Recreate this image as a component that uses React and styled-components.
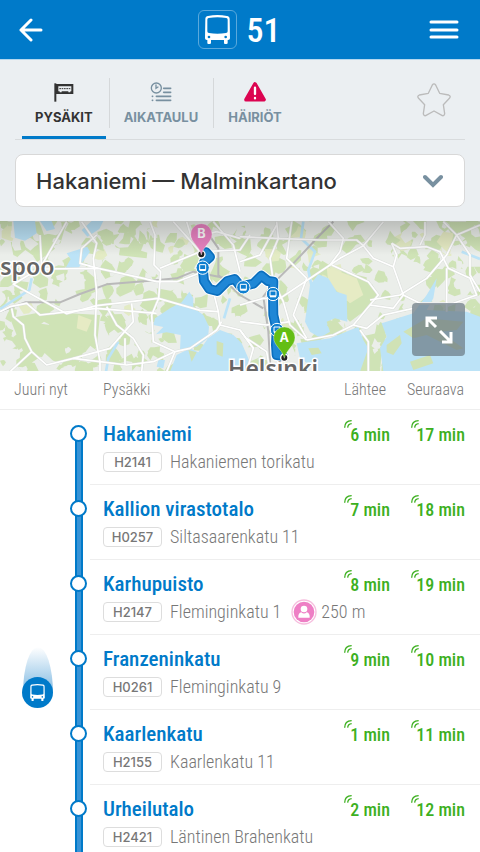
import { useState } from 'react';
import styled, { createGlobalStyle, css } from 'styled-components';

const NARROW = `'Roboto Condensed', 'Liberation Sans Narrow', 'Liberation Sans', sans-serif`;
const WIDE = `Inter, 'Liberation Sans', sans-serif`;

const stops = [
    { name: 'Hakaniemi', code: 'H2141', address: 'Hakaniemen torikatu', next: '6 min', following: '17 min' },
    { name: 'Kallion virastotalo', code: 'H0257', address: 'Siltasaarenkatu 11', next: '7 min', following: '18 min' },
    { name: 'Karhupuisto', code: 'H2147', address: 'Fleminginkatu 1', distance: '250 m', next: '8 min', following: '19 min' },
    { name: 'Franzeninkatu', code: 'H0261', address: 'Fleminginkatu 9', vehicle: true, next: '9 min', following: '10 min' },
    { name: 'Kaarlenkatu', code: 'H2155', address: 'Kaarlenkatu 11', next: '1 min', following: '11 min' },
    { name: 'Urheilutalo', code: 'H2421', address: 'Läntinen Brahenkatu', next: '2 min', following: '12 min' },
];

const tabs = [
    { id: 'stops', label: 'PYSÄKIT' },
    { id: 'timetable', label: 'AIKATAULU' },
    { id: 'alerts', label: 'HÄIRIÖT' },
];

const BusIcon = ({ width, height }) => (
    <svg width={width} height={height} viewBox='0 0 75 87' fill='currentColor' aria-hidden='true'>
        <path
            fillRule='evenodd'
            d='M9 3Q37-3 66 3Q74 4 74 12L75 70Q75 75 69 75H68V84Q68 87 64 87H60Q57 87 57 84V75H18V84Q18 87 14 87H10Q7 87 7 84V75H6Q0 75 0 70L1 12Q1 4 9 3ZM11 9Q7 9 7 14V49Q7 54 12 54Q37 58 63 54Q68 54 68 49V14Q68 9 64 9Q37 5 11 9ZM12 62A4 4 0 1 0 12 70A4 4 0 1 0 12 62ZM62 62A4 4 0 1 0 62 70A4 4 0 1 0 62 62Z'
        />
    </svg>
);

const TabIcon = ({ id }) => {
    if (id === 'stops') {
        return (
            <svg width='20' height='20' viewBox='0 0 60 60' aria-hidden='true'>
                <path d='M4 4V59' stroke='#333' strokeWidth='6' />
                <path fill='#333' d='M3 6H58V36H3Z' />
                <path fill='#ebeff2' d='M13 13H52V28H49V31H43V28H23V31H17V28H13Z' />
                <path stroke='#333' strokeWidth='3' d='M16 20H50' strokeDasharray='5 2' />
            </svg>
        );
    }
    if (id === 'timetable') {
        return (
            <svg width='22' height='20' viewBox='0 0 66 60' fill='none' stroke='#7890a0' strokeWidth='5' strokeLinecap='round' aria-hidden='true'>
                <circle cx='19' cy='18' r='15' strokeWidth='4' />
                <path d='M18 9V19L24 15' strokeWidth='4' />
                <path d='M41 19H62M41 31H62M19 43H62M19 55H62M7 43H8M7 55H8' />
            </svg>
        );
    }
    return (
        <svg width='22' height='20' viewBox='0 0 66 60' aria-hidden='true'>
            <path d='M33 6L60 53H6Z' fill='#dc0451' stroke='#dc0451' strokeWidth='11' strokeLinejoin='round' />
            <path d='M33 17V36M33 48V49' stroke='#fff' strokeWidth='7' strokeLinecap='round' />
        </svg>
    );
};

// Patches of woodland, spread evenly from a fixed seed.
const woodland = (() => {
    let seed = 51;
    const random = () => {
        seed = (seed * 16807) % 2147483647;
        return seed / 2147483647;
    };
    return Array.from({ length: 640 }, () => {
        const x = random() * 1440;
        const y = random() * 460 + 10;
        const size = 10 + random() * 20;
        const points = Array.from({ length: 7 }, (_, i) => {
            const angle = (i / 7) * Math.PI * 2;
            const r = size * (0.4 + random() * 0.9);
            return `${Math.round(x + Math.cos(angle) * r)} ${Math.round(y + Math.sin(angle) * r)}`;
        });
        const tone = random();
        const fill = tone < 0.56 ? '#cfe3b6' : tone < 0.61 ? '#e3ebc4' : '#ebeeea';
        return { d: `M${points.join('L')}Z`, fill };
    });
})();

const roads = [
    'M200 20L120 160L40 208L200 296L290 272L475 250L600 286L655 290',
    'M125 162L295 160L430 190L470 200H530L610 170',
    'M245 20L290 85L280 130L290 230L285 360L300 440V470',
    'M120 60L125 160M295 160L240 145L245 100L290 60',
    'M450 20L465 60L462 150L482 170L476 250L455 300L460 380L525 410L500 470',
    'M480 160L600 110L720 105L750 60',
    'M520 20L600 110L640 230L655 290L660 330L720 345L760 400',
    'M525 410L570 400L650 345L665 320',
    'M0 290L30 275L80 265L120 300L290 280L470 295',
    'M320 275L350 330L400 370L430 420L425 470',
    'M35 280L40 305L70 330L75 370L95 410L30 470M95 410L140 450L220 430L300 440L380 450L460 440L520 412',
    'M395 265L400 320L330 400L220 430M375 370V450',
    'M640 20L700 90L720 170M560 20L575 70L650 50L720 70',
    'M720 65L830 70L960 75L1070 75L1090 92L1150 20',
    'M830 20L835 70L810 130L820 200L850 260L870 330L920 375',
    'M1090 92L1020 130L990 150L900 210L840 250',
    'M1090 92L1120 130L1180 155L1210 240L1260 265',
    'M995 150L1105 200L1135 240L1110 270L1060 330L1000 360L920 375',
    'M1110 255L1200 240L1280 190L1340 120L1370 60L1440 30',
    'M1330 20L1370 60L1410 120V180L1440 230',
    'M1175 85L1200 100L1280 95L1320 110L1345 160L1410 190L1430 240L1360 265L1260 265',
    'M1340 160V290M1080 345L1105 380V470M1275 20V60L1260 90',
    'M720 140L780 120L830 30M720 270L790 250L840 250M875 20L860 130L920 190L880 300L920 370',
    'M720 345L760 400L740 470M740 370L800 410L810 470M720 320L800 330L870 320',
    'M985 20L1030 70L1020 110L990 150M1175 85L1190 120L1180 155M1110 270L1180 280L1210 240',
    'M1060 330L1100 340L1150 300L1240 280',
];

const Pin = ({ x, y, color, letter }) => (
    <g transform={`translate(${x} ${y})`}>
        <circle cy='-6' r='11' fill='#222' stroke='#fff' strokeWidth='4' />
        <path d='M0-4C-5-30-32-42-32-66A32 32 0 0 1 32-66C32-42 5-30 0-4Z' fill={color} stroke='#fff' strokeOpacity='.5' strokeWidth='2' />
        <PinLetter y='-54'>{letter}</PinLetter>
    </g>
);

const MapDrawing = () => (
    <MapSvg viewBox='0 18 1440 450' preserveAspectRatio='xMidYMid slice' role='img' aria-label='Helsinki'>
        <rect y='0' width='1440' height='480' fill='#ebeeea' />
        <path fill='#cfe3b6' d='M20 20H200L180 90L100 150L40 120ZM30 310L130 290L300 300L290 400L170 440L70 410ZM960 150L1110 190L1130 240L1090 290L1050 320L970 240ZM1330 20H1440V110L1370 80ZM470 220L580 240L550 300L480 290ZM1060 370L1150 350L1140 470H1020ZM340 60L450 40L440 130L350 120Z' />
        {woodland.map(({ d, fill }) => (
            <path key={d} d={d} fill={fill} />
        ))}
        <path fill='#cfe3b6' d='M80 320L150 330L210 310L240 360L200 400L120 400L75 360Z' />
        <path fill='#e6ebc4' d='M980 155L1070 190L1090 240L1050 265L985 205ZM1330 50L1360 55L1350 120L1310 80ZM235 300L275 315L260 350L230 340Z' />
        <g fill='#bce3f7'>
            <path d='M40 18H105L110 55L75 77L45 68ZM120 18H155L165 42L140 48ZM245 45L275 18H310L298 42L262 65ZM200 115L262 95L270 110L235 160L195 162L212 132Z' />
            <path d='M465 310L510 280L545 262L568 230L580 250L580 278L610 300L627 335L624 370L590 395L540 405L542 360L500 352L468 358L490 336L460 330Z' />
            <path d='M624 370L660 345L700 360L725 385L745 430L760 470H510L530 420L570 400L595 412ZM475 435H495L490 460L470 455Z' />
            <path d='M930 210L955 178L985 190L1010 230L1040 240L1042 320L1005 310L980 320L990 350L960 368L930 350L915 320Z' />
            <path d='M890 385L990 370L1075 335L1090 375L1105 400L1080 470H960L900 430Z' />
            <path d='M1145 325L1240 295L1280 240L1310 190L1300 250L1280 285L1400 290L1440 305V470H1150L1140 400L1160 365Z' />
        </g>
        <g fill='none' stroke='#bce3f7' strokeWidth='8'>
            <path d='M95 190L88 225L0 282M910 20L903 70L945 110L925 165L935 215M690 250L672 310M355 380L325 430L318 470M1385 110L1440 132' />
        </g>
        <path fill='#d0e2b5' d='M650 378L670 385L668 425L650 418ZM565 405L590 412L575 440ZM1160 390L1200 360L1205 385L1180 420L1160 412ZM925 400L955 398L965 415L935 420ZM980 330L1010 318L1030 340L1000 350ZM1210 350L1280 310L1390 320L1370 345L1320 350L1390 400L1370 405L1280 360L1240 370ZM1230 440L1290 420L1300 445L1240 465Z' />
        <g fill='none' strokeLinejoin='round'>
            <path d='M0 290L75 262L180 262L240 237L320 208L450 197L530 190L580 170L690 192M1000 20L960 60L880 145L820 205L790 245L805 350L812 470M620 50L655 100V180L720 240L790 280' stroke='#b9b9b9' strokeWidth='6' />
            {roads.map((d) => (
                <path key={d} d={d} stroke='#dcdfdc' strokeWidth='8' />
            ))}
            {roads.map((d) => (
                <path key={d} d={d} stroke='#fff' strokeWidth='5' />
            ))}
        </g>
        <PlaceName x='163' y='180' textAnchor='end'>spoo</PlaceName>
        <PlaceName x='819' y='485' textAnchor='middle'>Helsinki</PlaceName>
        <g fill='none' strokeLinejoin='round' strokeLinecap='round'>
            {[['#fff', 36], ['#0b6fbe', 30], ['#1f87d6', 20]].map(([color, width]) => (
                <path
                    key={color}
                    d='M618 112L630 126L612 142L608 158L612 198L628 222L652 228L682 198L704 192L722 215L760 206L784 182L804 198L820 200L819 237L820 300L830 345L828 390L830 420L848 422'
                    stroke={color}
                    strokeWidth={width}
                />
            ))}
        </g>
        {[[608, 158], [730, 217], [819, 237], [831, 345]].map(([x, y]) => (
            <g key={x} transform={`translate(${x} ${y})`}>
                <circle r='20' fill='#0f7fd0' stroke='#fff' strokeWidth='3' />
                <path d='M-9-9H9V7H-9Z' fill='none' stroke='#fff' strokeWidth='3' />
                <path d='M-9 4H9V10H-9Z' fill='#fff' />
            </g>
        ))}
        <Pin x={604} y={124} color='#ea83c2' letter='B' />
        <Pin x={853} y={434} color='#64be14' letter='A' />
    </MapSvg>
);

const Departure = ({ children }) => (
    <Time>
        <Signal viewBox='0 0 24 24' aria-hidden='true'>
            <path d='M2 23Q2 3 23 2M11 23Q12 12 23 11' />
        </Signal>
        {children}
    </Time>
);

const App = () => {
    const [activeTab, setActiveTab] = useState('stops');

    return (
        <>
            <GlobalStyle />
            <TopBar>
                <IconButton type='button' aria-label='Takaisin'>
                    <svg width='24' height='24' viewBox='0 0 24 24' fill='none' stroke='#fff' strokeWidth='3' strokeLinecap='round' strokeLinejoin='round'>
                        <path d='M12 2L2 12L12 22M2 12H22' />
                    </svg>
                </IconButton>
                <RouteTitle>
                    <ModeBadge>
                        <BusIcon width={25} height={29} />
                    </ModeBadge>
                    51
                </RouteTitle>
                <IconButton type='button' aria-label='Valikko'>
                    <svg width='30' height='20' viewBox='0 0 30 20' stroke='#fff' strokeWidth='3' strokeLinecap='round'>
                        <path d='M2 2H28M2 10H28M2 17H28' />
                    </svg>
                </IconButton>
            </TopBar>

            <Controls>
                <TabRow>
                    <TabList>
                        {tabs.map(({ id, label }) => (
                            <TabItem key={id}>
                                <Tab type='button' $active={id === activeTab} onClick={() => setActiveTab(id)}>
                                    <TabIcon id={id} />
                                    {label}
                                </Tab>
                            </TabItem>
                        ))}
                    </TabList>
                    <IconButton type='button' aria-label='Lisää suosikiksi'>
                        <svg width='34' height='34' viewBox='0 0 102 102' fill='none' stroke='#bbb' strokeWidth='4' strokeLinejoin='round'>
                            <path d='M46 6Q51-1 56 6L68 31L95 36Q102 39 98 45L79 65L83 92Q82 99 76 98L51 84L26 98Q20 99 19 92L23 65L4 45Q0 39 7 36L34 31Z' />
                        </svg>
                    </IconButton>
                </TabRow>
                <SelectWrap>
                    <PatternSelect aria-label='Suunta' defaultValue='0'>
                        <option value='0'>Hakaniemi — Malminkartano</option>
                    </PatternSelect>
                    <Chevron viewBox='0 0 20 14' aria-hidden='true'>
                        <path d='M2 3L10 11L18 3' />
                    </Chevron>
                </SelectWrap>
            </Controls>

            <MapPanel>
                <MapDrawing />
                <MapShade />
                <ExpandButton type='button' aria-label='Suurenna kartta'>
                    <svg width='30' height='30' viewBox='0 0 30 30' fill='none' stroke='#fff' strokeWidth='3'>
                        <path d='M3 12V3H13M3 3L12 12M18 27H27V17M27 27L16 16' />
                    </svg>
                </ExpandButton>
            </MapPanel>

            <StopTable>
                <colgroup>
                    <Col $width={66} />
                    <Col $width={24} />
                    <col />
                    <Col $width={54} />
                    <Col $width={82} />
                </colgroup>
                <thead>
                    <tr>
                        <HeadCell colSpan={2} $start={14}>Juuri nyt</HeadCell>
                        <HeadCell $start={13}>Pysäkki</HeadCell>
                        <HeadCell>Lähtee</HeadCell>
                        <HeadCell $start={9}>Seuraava</HeadCell>
                    </tr>
                </thead>
                <tbody>
                    {stops.map((stop, index) => (
                        <tr key={stop.code}>
                            <NowCell>
                                {stop.vehicle && (
                                    <Vehicle>
                                        <Trail />
                                        <VehicleDot>
                                            <BusIcon width={15} height={17} />
                                        </VehicleDot>
                                    </Vehicle>
                                )}
                            </NowCell>
                            <RailCell $first={index === 0}>
                                <RailDot />
                            </RailCell>
                            <StopCell>
                                <StopName href={`#${stop.code}`}>{stop.name}</StopName>
                                <StopInfo>
                                    <StopCode>{stop.code}</StopCode>
                                    <span>{stop.address}</span>
                                    {stop.distance && (
                                        <Distance>
                                            <svg width='26' height='26' viewBox='0 0 78 78' aria-hidden='true'>
                                                <circle cx='39' cy='39' r='36' fill='#fff' stroke='#f6bede' strokeWidth='4' />
                                                <circle cx='39' cy='39' r='31' fill='#ee7fc5' />
                                                <circle cx='39' cy='30' r='10' fill='#fff' />
                                                <path d='M22 56Q21 42 31 40Q39 47 47 40Q57 42 56 56Z' fill='#fff' />
                                            </svg>
                                            {stop.distance}
                                        </Distance>
                                    )}
                                </StopInfo>
                            </StopCell>
                            <TimeCell>
                                <Departure>{stop.next}</Departure>
                            </TimeCell>
                            <TimeCell $last>
                                <Departure>{stop.following}</Departure>
                            </TimeCell>
                        </tr>
                    ))}
                </tbody>
            </StopTable>
        </>
    );
};

const GlobalStyle = createGlobalStyle`
    * {
        box-sizing: border-box;
    }
    body {
        margin: 0;
        background: #fff;
        color: #777;
        font-family: ${NARROW};
    }
    button {
        font: inherit;
        border: 0;
        background: none;
        cursor: pointer;
    }
    svg {
        display: block;
        flex: none;
    }
`;

const IconButton = styled.button`
    display: flex;
    align-items: center;
    justify-content: center;
    padding: 5px;
`;

const TopBar = styled.header`
    display: grid;
    grid-template-columns: 1fr auto 1fr;
    align-items: center;
    height: 60px;
    padding: 0 16px 0 14px;
    background: #007ac9;
    border-bottom: 1px solid #b3d7ef;

    ${IconButton} {
        justify-self: start;
    }
    ${IconButton}:last-child {
        justify-self: end;
    }
`;

const RouteTitle = styled.h1`
    display: flex;
    align-items: center;
    gap: 10px;
    margin: 0;
    color: #fff;
    font-size: 34px;
    line-height: 40px;
    font-weight: 500;
`;

const ModeBadge = styled.span`
    display: flex;
    align-items: center;
    justify-content: center;
    width: 39px;
    height: 39px;
    border: 1px solid #5aa9dc;
    border-radius: 6px;
`;

const Controls = styled.section`
    padding: 18px 15px 14px;
    background: #ebeff2;
`;

const TabRow = styled.nav`
    display: flex;
    align-items: flex-start;
    justify-content: space-between;
    padding: 0 9px 0 7px;
    border-bottom: 1px solid #d8dbdd;
`;

const TabList = styled.ul`
    display: flex;
    margin: 0;
    padding: 0;
    list-style: none;
`;

const TabItem = styled.li`
    position: relative;
    padding: 0 2px;

    &:first-child {
        padding: 0 3px 0 0;
    }

    & + &::before {
        content: '';
        position: absolute;
        left: 0;
        top: 0;
        width: 1px;
        height: 50px;
        background: #d5d8da;
    }
`;

const Tab = styled.button`
    display: flex;
    flex-direction: column;
    align-items: center;
    gap: 6px;
    height: 61px;
    padding: 4px 13px 0;
    border-bottom: 3px solid ${({ $active }) => ($active ? '#007ac9' : 'transparent')};
    color: ${({ $active }) => ($active ? '#333' : '#7890a0')};
    font-family: ${WIDE};
    font-size: 13px;
    line-height: 18px;
    font-weight: 700;
`;

const SelectWrap = styled.div`
    position: relative;
    margin-top: 14px;
`;

const PatternSelect = styled.select`
    display: block;
    width: 100%;
    height: 53px;
    padding: 0 60px 0 20px;
    appearance: none;
    border: 1px solid #d8d8d8;
    border-radius: 8px;
    background: #fff;
    color: #333;
    font-family: ${WIDE};
    font-size: 22px;
    font-weight: 500;
`;

const Chevron = styled.svg`
    position: absolute;
    right: 22px;
    top: 20px;
    width: 20px;
    height: 14px;
    fill: none;
    stroke: #7890a0;
    stroke-width: 4px;
    stroke-linecap: round;
    pointer-events: none;
`;

const MapPanel = styled.section`
    position: relative;
    height: 150px;
    overflow: hidden;
`;

const MapSvg = styled.svg`
    width: 100%;
    height: 100%;
`;

const MapShade = styled.div`
    position: absolute;
    inset: 0;
    background: linear-gradient(rgba(0, 0, 0, 0.2), transparent 34px);
    pointer-events: none;
`;

const PlaceName = styled.text`
    fill: #666;
    stroke: #fff;
    stroke-width: 9px;
    paint-order: stroke;
    font-family: 'Noto Sans', sans-serif;
    font-size: 69px;
    font-weight: 600;
`;

const PinLetter = styled.text`
    fill: #fff;
    font-family: ${WIDE};
    font-size: 38px;
    font-weight: 700;
    text-anchor: middle;
`;

const ExpandButton = styled.button`
    position: absolute;
    right: 15px;
    bottom: 15px;
    display: flex;
    align-items: center;
    justify-content: center;
    width: 53px;
    height: 53px;
    padding: 0;
    border-radius: 4px;
    background: rgba(105, 120, 130, 0.7);
`;

const StopTable = styled.table`
    width: 100%;
    table-layout: fixed;
    border-collapse: separate;
    border-spacing: 0;
`;

const Col = styled.col`
    width: ${({ $width }) => $width}px;
`;

const HeadCell = styled.th`
    height: 39px;
    padding: 0 0 0 ${({ $start = 0 }) => $start}px;
    border-bottom: 1px solid #eee;
    font-size: 16px;
    font-weight: 300;
    line-height: 20px;
    text-align: left;
`;

const cell = css`
    height: 75px;
    padding: 0;
    vertical-align: top;
`;

const NowCell = styled.td`
    ${cell}
`;

const Vehicle = styled.div`
    display: flex;
    flex-direction: column;
    align-items: center;
    padding: 12px 0 0 9px;
`;

const Trail = styled.div`
    width: 30px;
    height: 46px;
    margin-bottom: -16px;
    border-radius: 50% 50% 0 0 / 100% 100% 0 0;
    background: linear-gradient(#fff, #7fb9e2);
`;

const VehicleDot = styled.div`
    display: flex;
    align-items: center;
    justify-content: center;
    width: 31px;
    height: 31px;
    border-radius: 50%;
    background: #007ac9;
    color: #fff;
`;

const RailCell = styled.td`
    ${cell}
    padding: 15px 3px 0 4px;
    background: linear-gradient(90deg, #007ac9 2px, #3893d6 2px 6px, #007ac9 6px) no-repeat 9px ${({ $first }) => ($first ? 24 : 0)}px / 8px 100%;
`;

const RailDot = styled.div`
    width: 17px;
    height: 17px;
    border: 2px solid #007ac9;
    border-radius: 50%;
    background: #fff;
`;

const StopCell = styled.td`
    ${cell}
    padding: 11px 0 0 13px;
    border-bottom: 1px solid #eee;
    white-space: nowrap;
`;

const StopName = styled.a`
    display: block;
    color: #007ac9;
    font-size: 21px;
    line-height: 26px;
    font-weight: 500;
    text-decoration: none;
`;

const StopInfo = styled.div`
    display: flex;
    align-items: center;
    gap: 8px;
    height: 30px;
    font-size: 18px;
    line-height: 30px;
    font-weight: 300;
`;

const StopCode = styled.span`
    flex: none;
    width: 59px;
    height: 20px;
    border: 1px solid #ddd;
    border-radius: 4px;
    font-family: ${WIDE};
    font-size: 13px;
    line-height: 18px;
    font-weight: 500;
    text-align: center;
`;

const Distance = styled.span`
    display: flex;
    align-items: center;
    gap: 4px;
    padding-left: 2px;
`;

const TimeCell = styled.td`
    ${cell}
    padding: 10px ${({ $last }) => ($last ? '15px 0 13px' : '8px 0 0')};
    border-bottom: 1px solid #eee;
`;

const Time = styled.span`
    position: relative;
    display: block;
    color: #3db01f;
    font-size: 18px;
    line-height: 30px;
    font-weight: 500;
    text-align: right;
    white-space: nowrap;
`;

const Signal = styled.svg`
    position: absolute;
    left: 0;
    top: 0;
    width: 8px;
    height: 8px;
    fill: none;
    stroke: currentColor;
    stroke-width: 4px;
`;

export default App;
